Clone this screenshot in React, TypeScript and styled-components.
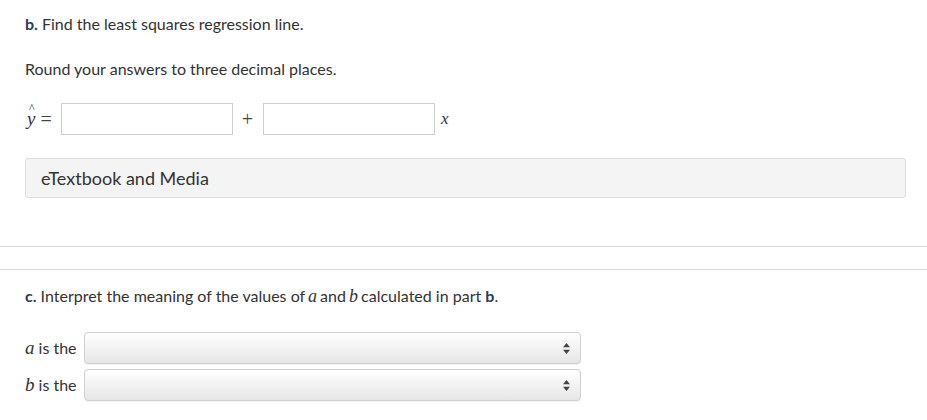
import styled, { createGlobalStyle } from "styled-components";

const GlobalStyle = createGlobalStyle`
  html, body {
    margin: 0;
    padding: 0;
    background: #fff;
  }
  body {
    font-family: Lato, "Open Sans", sans-serif;
    color: #333;
    font-size: 16px;
  }
`;

const Page = styled.div`
  width: 927px;
  height: 420px;
  overflow: hidden;
`;

const Section = styled.section<{ $top: number }>`
  padding: ${({ $top }) => $top}px 21px 0 25px;
`;

const Heading = styled.p`
  margin: 0;
  font-size: 16px;
  line-height: 18px;
  color: #333;

  b {
    font-weight: 700;
    color: #2d3e4f;
  }
`;

const Note = styled.p`
  margin: 27px 0 0;
  font-size: 16px;
  line-height: 18px;
`;

const EquationRow = styled.div`
  display: flex;
  align-items: center;
  margin-top: 25px;
  height: 32px;
`;

const MathVar = styled.span`
  font-family: "Liberation Serif", "DejaVu Serif", serif;
  font-style: italic;
  font-size: 19px;
`;

const InlineVar = styled(MathVar)`
  font-size: 18px;
  margin: 0 -1px;
`;

const Hatted = styled(MathVar)`
  position: relative;
  display: inline-block;
  margin-left: 2px;

  &::before {
    content: "^";
    position: absolute;
    font-style: normal;
    font-size: 12px;
    left: 2px;
    top: -7px;
  }
`;

const Op = styled.span<{ $gapL: number; $gapR: number }>`
  font-family: "Liberation Serif", "DejaVu Serif", serif;
  font-size: 20px;
  color: #444;
  margin: 0 ${({ $gapR }) => $gapR}px 0 ${({ $gapL }) => $gapL}px;
`;

const AnswerBox = styled.input`
  width: 172px;
  height: 32px;
  box-sizing: border-box;
  border: 1px solid #cfcfcf;
  background: #fff;
  padding: 0 6px;
  font: inherit;
`;

const XVar = styled(MathVar)`
  margin-left: 6px;
  font-size: 17px;
`;

const MediaBar = styled.div`
  margin-top: 23px;
  height: 40px;
  box-sizing: border-box;
  display: flex;
  align-items: center;
  padding-left: 15px;
  background: #f4f4f4;
  border: 1px solid #dedede;
  border-radius: 3px;
  font-size: 18px;
  color: #333;
`;

const Rule = styled.hr<{ $top: number }>`
  margin: ${({ $top }) => $top}px 0 0;
  border: 0;
  border-top: 1px solid #d8d8d8;
  height: 0;
`;

const SelectRow = styled.div<{ $top: number }>`
  display: flex;
  align-items: center;
  margin-top: ${({ $top }) => $top}px;
`;

const RowLabel = styled.span`
  width: 59px;
  font-size: 16px;
`;

const FakeSelect = styled.div`
  position: relative;
  width: 497px;
  height: 32px;
  box-sizing: border-box;
  border: 1px solid #d0d0d0;
  border-radius: 4px;
  background: linear-gradient(#ffffff, #e6e6e6);
  box-shadow: 0 1px 1px rgba(0, 0, 0, 0.06);
`;

const Arrows = styled.svg`
  position: absolute;
  right: 10px;
  top: 10px;
`;

function Select() {
  return (
    <FakeSelect>
      <Arrows width="7" height="11" viewBox="0 0 7 11">
        <path d="M3.5 0 L7 4.2 L0 4.2 Z M3.5 11 L7 6.8 L0 6.8 Z" fill="#444" />
      </Arrows>
    </FakeSelect>
  );
}

export default function App() {
  return (
    <Page>
      <GlobalStyle />
      <Section $top={15}>
        <Heading>
          <b>b.</b> Find the least squares regression line.
        </Heading>
        <Note>Round your answers to three decimal places.</Note>
        <EquationRow>
          <Hatted>y</Hatted>
          <Op $gapL={5} $gapR={9}>=</Op>
          <AnswerBox />
          <Op $gapL={9} $gapR={10}>+</Op>
          <AnswerBox />
          <XVar>x</XVar>
        </EquationRow>
        <MediaBar>eTextbook and Media</MediaBar>
      </Section>
      <Rule $top={48} />
      <Rule $top={22} />
      <Section $top={17}>
        <Heading>
          <b>c.</b> Interpret the meaning of the values of <InlineVar>a</InlineVar> and{" "}
          <InlineVar>b</InlineVar> calculated in part <b>b</b>.
        </Heading>
        <SelectRow $top={27}>
          <RowLabel>
            <MathVar>a</MathVar> is the
          </RowLabel>
          <Select />
        </SelectRow>
        <SelectRow $top={5}>
          <RowLabel>
            <MathVar>b</MathVar> is the
          </RowLabel>
          <Select />
        </SelectRow>
      </Section>
    </Page>
  );
}
